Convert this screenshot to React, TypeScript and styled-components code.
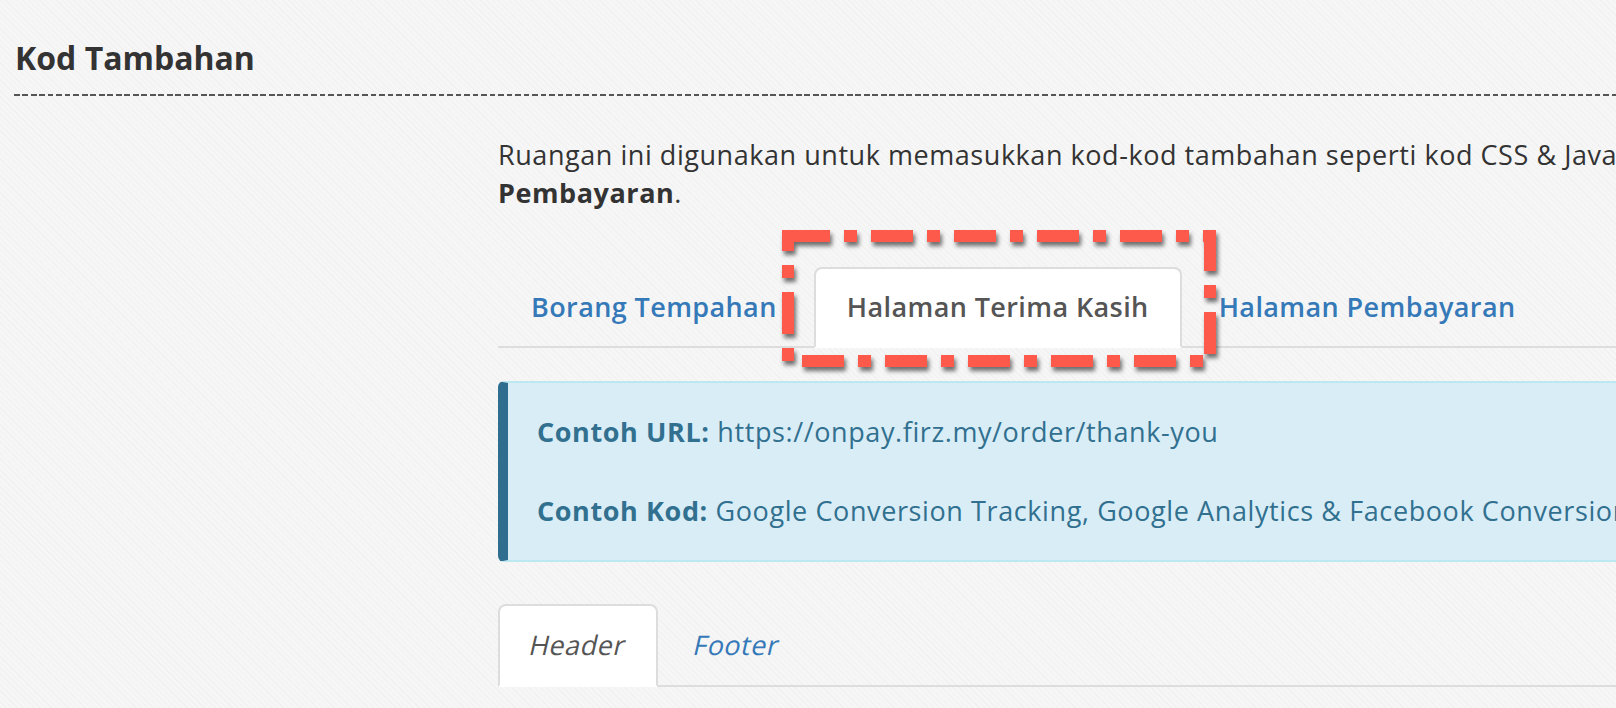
import React from 'react';
import styled, { createGlobalStyle } from 'styled-components';

const Global = createGlobalStyle`
  html, body { margin: 0; padding: 0; }
  body {
    width: 1616px;
    height: 708px;
    overflow: hidden;
    background-color: #f6f6f6;
    background-image: repeating-linear-gradient(45deg, rgba(0,0,0,0.02) 0 1px, transparent 1px 4px);
    font-family: "Open Sans", "Noto Sans", sans-serif;
    color: #333;
  }
`;

const Page = styled.div`
  padding-top: 39px;
`;

const SectionHead = styled.div`
  margin-left: 14px;
`;

const Title = styled.h3`
  margin: 0;
  padding-left: 1px;
  font-size: 32px;
  line-height: 37px;
  font-weight: 700;
  color: #333;
`;

const Rule = styled.div`
  margin-top: 18px;
  height: 1.5px;
  background: repeating-linear-gradient(to right, #555 0 5.5px, transparent 5.5px 8.5px);
`;

const Body = styled.div`
  display: grid;
  grid-template-columns: 498px 1400px;
`;

const Content = styled.div`
  grid-column: 2;
`;

const Intro = styled.p`
  margin: 40px 0 0;
  font-size: 27px;
  line-height: 38px;
  letter-spacing: 0.55px;
  white-space: nowrap;
  color: #333;
`;

const NavWrap = styled.div<{ $top: number }>`
  position: relative;
  margin-top: ${p => p.$top}px;
`;

const TabList = styled.ul`
  display: flex;
  margin: 0;
  padding: 0;
  list-style: none;
  border-bottom: 2px solid #ddd;
`;

const TabItem = styled.li`
  margin: 0 4px -2px 0;
`;

const Tab = styled.a<{ $active?: boolean; $italic?: boolean }>`
  display: block;
  padding: ${p => (p.$italic ? '20px 30px 21px' : '19px 31px 20px')};
  border: 2px solid ${p => (p.$active ? '#ddd' : 'transparent')};
  border-bottom-color: transparent;
  border-radius: 8px 8px 0 0;
  background: ${p => (p.$active ? '#fff' : 'transparent')};
  color: ${p => (p.$active ? '#555' : '#3579b8')};
  font-size: 27px;
  line-height: 38px;
  font-weight: ${p => (p.$italic ? 400 : 600)};
  letter-spacing: ${p => (p.$italic ? 0.5 : 0.4)}px;
  text-decoration: none;
  white-space: nowrap;
  cursor: pointer;
`;

const Slanted = styled.span`
  display: inline-block;
  transform: skewX(-13deg);
`;

const Callout = styled.svg`
  position: absolute;
  left: 284px;
  top: -37px;
  overflow: visible;
  filter: drop-shadow(2px 4px 2px rgba(0, 0, 0, 0.55));
  pointer-events: none;
`;

const InfoBox = styled.div`
  margin-top: 33px;
  padding: 30px 29px;
  background: #d9edf7;
  border: 2px solid #bce8f1;
  border-left: 10px solid #2f6e8f;
  border-radius: 6px;
  color: #31708f;
  font-size: 27px;
  line-height: 38px;
  letter-spacing: 0.6px;
  white-space: nowrap;
`;

const InfoLine = styled.p`
  margin: 0;
  & + & {
    margin-top: 41px;
  }
`;

const mainTabs = ['Borang Tempahan', 'Halaman Terima Kasih', 'Halaman Pembayaran'];
const codeTabs = ['Header', 'Footer'];

export default function App() {
  return (
    <>
      <Global />
      <Page>
        <SectionHead>
          <Title>Kod Tambahan</Title>
          <Rule />
        </SectionHead>
        <Body>
          <Content>
            <Intro>
              Ruangan ini digunakan untuk memasukkan kod-kod tambahan seperti kod CSS &amp; JavaScript ke dalam{' '}
              <b>Borang Tempahan</b>, <b>Halaman Terima Kasih</b> dan <b>Halaman</b>
              <br />
              <b>Pembayaran</b>.
            </Intro>
            <NavWrap $top={55}>
              <TabList>
                {mainTabs.map((t, i) => (
                  <TabItem key={t}>
                    <Tab $active={i === 1}>{t}</Tab>
                  </TabItem>
                ))}
              </TabList>
              <Callout width="434" height="137" viewBox="0 0 434 137">
                <rect
                  x="6"
                  y="6"
                  width="422"
                  height="125"
                  fill="none"
                  stroke="#fd5a4c"
                  strokeWidth="12"
                  strokeDasharray="42 14 13 14"
                />
              </Callout>
            </NavWrap>
            <InfoBox>
              <InfoLine>
                <b>Contoh URL:</b> https://onpay.firz.my/order/thank-you
              </InfoLine>
              <InfoLine>
                <b>Contoh Kod:</b> Google Conversion Tracking, Google Analytics &amp; Facebook Conversion Pixel
              </InfoLine>
            </InfoBox>
            <NavWrap $top={42}>
              <TabList>
                {codeTabs.map((t, i) => (
                  <TabItem key={t}>
                    <Tab $active={i === 0} $italic>
                      <Slanted>{t}</Slanted>
                    </Tab>
                  </TabItem>
                ))}
              </TabList>
            </NavWrap>
          </Content>
        </Body>
      </Page>
    </>
  );
}
